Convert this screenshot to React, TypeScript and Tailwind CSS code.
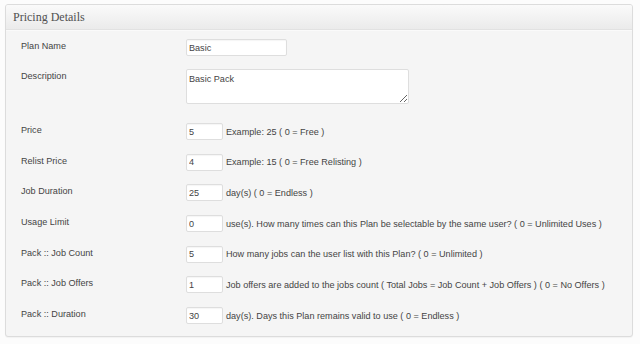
const rows = [
  { label: "Price", value: "5", hint: "Example: 25 ( 0 = Free )" },
  { label: "Relist Price", value: "4", hint: "Example: 15 ( 0 = Free Relisting )" },
  { label: "Job Duration", value: "25", hint: "day(s) ( 0 = Endless )" },
  {
    label: "Usage Limit",
    value: "0",
    hint: "use(s). How many times can this Plan be selectable by the same user? ( 0 = Unlimited Uses )",
  },
  { label: "Pack :: Job Count", value: "5", hint: "How many jobs can the user list with this Plan? ( 0 = Unlimited )" },
  {
    label: "Pack :: Job Offers",
    value: "1",
    hint: "Job offers are added to the jobs count ( Total Jobs = Job Count + Job Offers ) ( 0 = No Offers )",
  },
  { label: "Pack :: Duration", value: "30", hint: "day(s). Days this Plan remains valid to use ( 0 = Endless )" },
];

const inputCls =
  "h-[17px] rounded-[2px] border border-[#dedede] bg-white px-[2px] text-[9.1px] text-[#444] outline-none shadow-[inset_0_1px_1px_rgba(0,0,0,0.04)]";

export default function App() {
  return (
    <div
      className="h-[344px] w-[640px] bg-[#fcfcfc] pl-[5px] pr-[7px] pt-[4px]"
      style={{ fontFamily: '"Liberation Sans", Arial, sans-serif' }}
    >
      <div className="h-[333px] overflow-hidden rounded-[3px] border border-[#dcdcdc] bg-[#f5f5f5] shadow-[0_1px_1px_rgba(0,0,0,0.04)]">
        <div className="flex h-[25px] items-center border-b border-[#e2e2e2] bg-gradient-to-b from-[#fafafa] to-[#ebebeb] pl-[7px] shadow-[0_1px_0_#fafafa]">
          <h3
            className="text-[12px] text-[#505050]"
            style={{ fontFamily: '"Liberation Serif", Georgia, serif' }}
          >
            Pricing Details
          </h3>
        </div>

        <div className="flex flex-col pl-[15px] pt-[9px] text-[9.1px] text-[#444]">
          <div className="flex items-start">
            <label className="w-[165px] pt-[1px] leading-[12px]">Plan Name</label>
            <input className={`${inputCls} w-[101px]`} defaultValue="Basic" readOnly />
          </div>

          <div className="mt-[13px] flex items-start">
            <label className="w-[165px] pt-[1px] leading-[12px]">Description</label>
            <textarea
              className="h-[35px] w-[223px] rounded-[2px] border border-[#dedede] bg-white px-[2px] py-[3px] text-[9.1px] leading-[12px] text-[#444] outline-none"
              defaultValue="Basic Pack"
              readOnly
            />
          </div>

          <div className="mt-[19px] flex flex-col gap-[13.7px]">
            {rows.map((r) => (
              <div key={r.label} className="flex items-start">
                <label className="w-[165px] pt-[1px] leading-[12px]">{r.label}</label>
                <div className="flex items-center gap-[3px]">
                  <input className={`${inputCls} w-[37px]`} defaultValue={r.value} readOnly />
                  <span className="leading-[12px]">{r.hint}</span>
                </div>
              </div>
            ))}
          </div>
        </div>
      </div>
    </div>
  );
}
